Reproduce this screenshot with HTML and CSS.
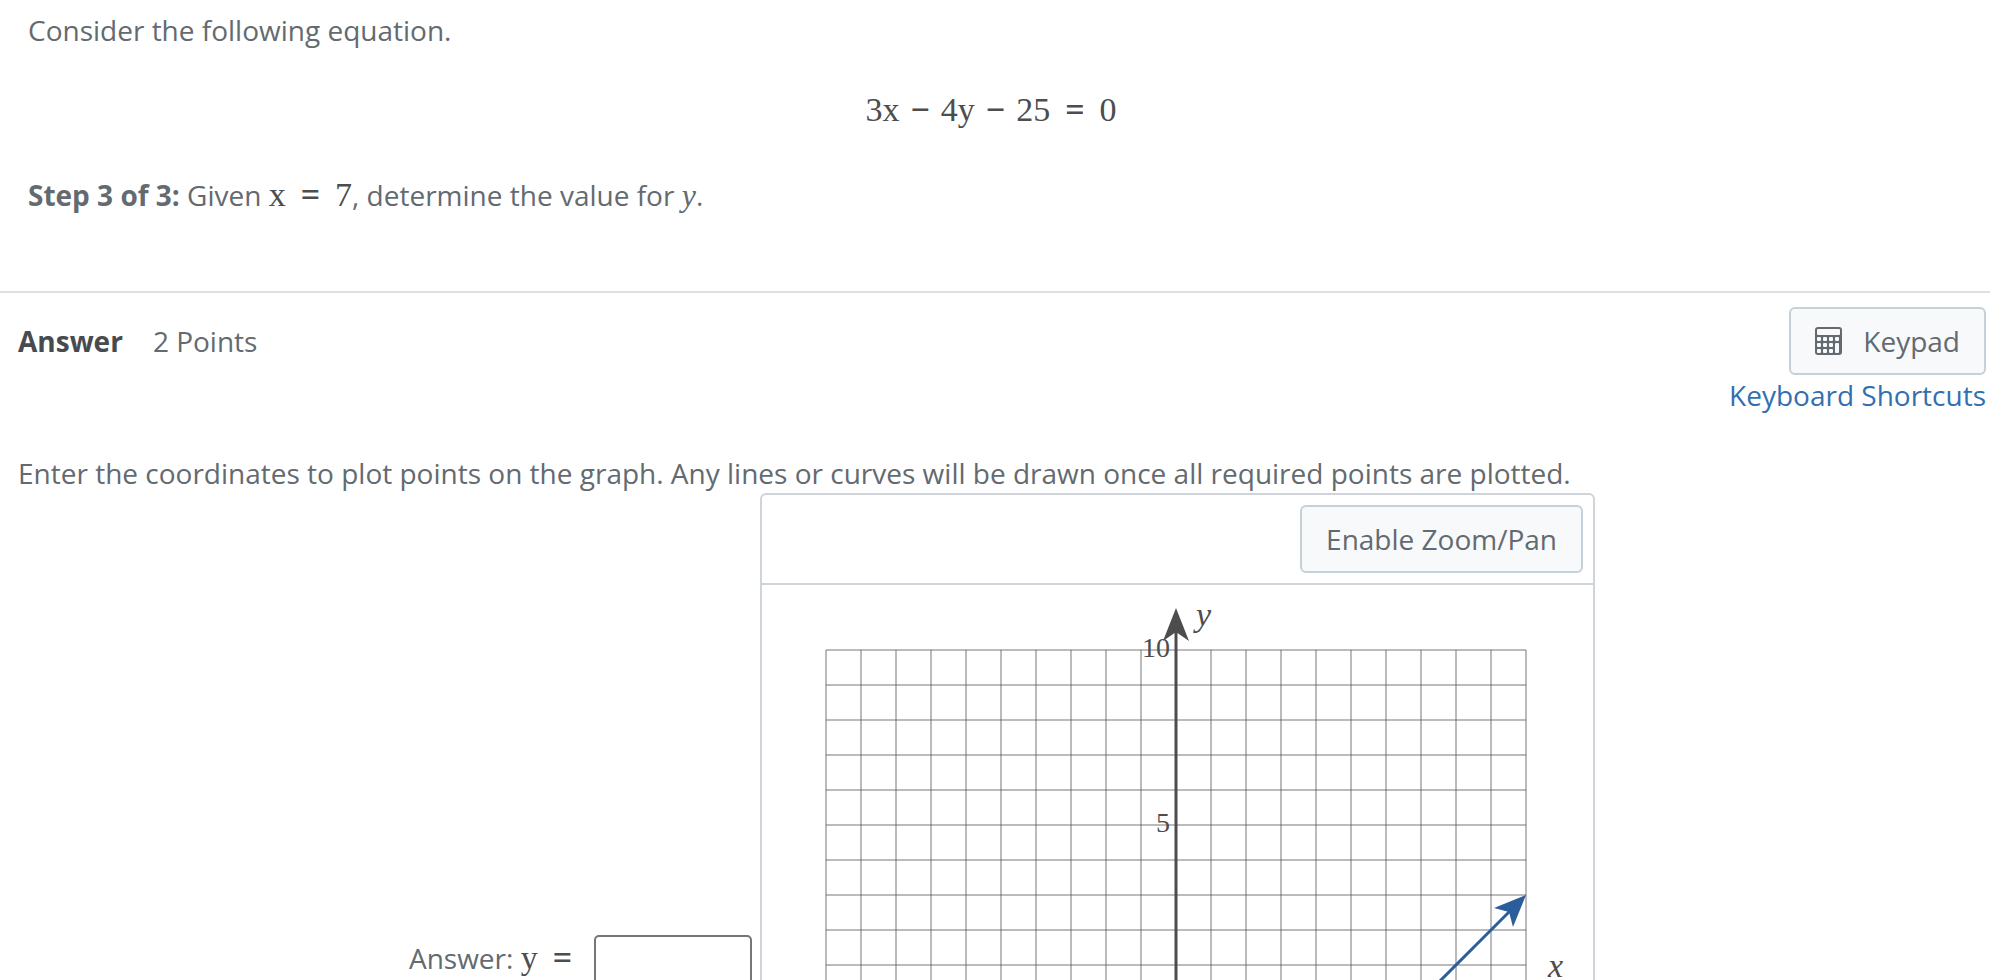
FILE: index.html
```html
<!DOCTYPE html>
<html lang="en">
<head>
  <meta charset="UTF-8">
  <title>Graphing Question</title>
  <link rel="stylesheet" href="styles.css">
</head>
<body>

<div class="question">
  <p>Consider the following equation.</p>
  <p class="equation math">3x<span class="op">&minus;</span>4y<span class="op">&minus;</span>25<span class="rel">=</span>0</p>
  <p><b>Step 3 of 3:</b> Given <span class="math">x<span class="rel">=</span>7</span>, determine the value for <i class="var">y</i>.</p>
</div>

<div class="answer">
  <div class="answer-header">
    <div class="answer-title">
      <h2>Answer</h2>
      <span>2 Points</span>
    </div>
    <div class="tools">
      <button class="btn" type="button">
        <svg class="icon" width="27" height="28" viewBox="0 0 27 28">
          <rect width="27" height="28" rx="3" fill="#636a70"/>
          <g fill="#f8f9fb">
            <rect x="2" y="2" width="23" height="6" rx="1"/>
            <rect x="2" y="10" width="4" height="4" rx="1"/>
            <rect x="8" y="10" width="4" height="4" rx="1"/>
            <rect x="14" y="10" width="4" height="4" rx="1"/>
            <rect x="20" y="10" width="4" height="4" rx="1"/>
            <rect x="2" y="16" width="4" height="4" rx="1"/>
            <rect x="8" y="16" width="4" height="4" rx="1"/>
            <rect x="14" y="16" width="4" height="4" rx="1"/>
            <rect x="20" y="16" width="4" height="10" rx="1"/>
            <rect x="2" y="22" width="4" height="4" rx="1"/>
            <rect x="8" y="22" width="4" height="4" rx="1"/>
            <rect x="14" y="22" width="4" height="4" rx="1"/>
          </g>
        </svg>
        Keypad
      </button>
      <a href="#">Keyboard Shortcuts</a>
    </div>
  </div>

  <p class="instructions">Enter the coordinates to plot points on the graph. Any lines or curves will be drawn once all required points are plotted.</p>

  <div class="work">
    <div class="field">
      <label for="yValue">Answer: <span class="math">y<span class="rel">=</span></span></label>
      <input type="text" id="yValue">
    </div>

    <div class="graph">
      <div class="graph-bar">
        <button class="btn" type="button">Enable Zoom/Pan</button>
      </div>
      <svg class="plot" width="831" height="840" viewBox="0 0 831 840">
        <!-- grid, one unit = 35px -->
        <path class="grid" d="M64 65V765M99 65V765M134 65V765M169 65V765M204 65V765M239 65V765M274 65V765M309 65V765M344 65V765M379 65V765M414 65V765M449 65V765M484 65V765M519 65V765M554 65V765M589 65V765M624 65V765M659 65V765M694 65V765M729 65V765M764 65V765"/>
        <path class="grid" d="M64 65H764M64 100H764M64 135H764M64 170H764M64 205H764M64 240H764M64 275H764M64 310H764M64 345H764M64 380H764M64 415H764M64 450H764M64 485H764M64 520H764M64 555H764M64 590H764M64 625H764M64 660H764M64 695H764M64 730H764M64 765H764"/>
        <!-- axes -->
        <path class="axis" d="M414 45V785M44 415H784"/>
        <path class="axis-head" d="M414 23L427 56L414 47L401 56ZM806 415L773 402L782 415L773 428Z"/>
        <text class="tick" x="408" y="72">10</text>
        <text class="tick" x="408" y="247">5</text>
        <text class="axis-name" x="434" y="41">y</text>
        <text class="axis-name" x="786" y="392">x</text>
        <!-- line -->
        <path class="line" d="M309 765L748 326"/>
        <path class="line-head" d="M764 310L751 342L747 327L732 323Z"/>
      </svg>
    </div>
  </div>
</div>

</body>
</html>
```

FILE: styles.css
```css
* {
  box-sizing: border-box;
}

body {
  margin: 0;
  height: 100vh;
  overflow: hidden;
  background: #fff;
  color: #636a70;
  font-family: 'Open Sans', sans-serif;
  font-size: 28px;
  line-height: 38px;
}

p {
  margin: 0;
}

.math {
  color: #4d4d4d;
  font-family: 'Liberation Serif', serif;
  font-size: 34px;
}

.op {
  margin: 0 11px;
  font-weight: bold;
}

.rel {
  margin: 0 15px;
  font-weight: bold;
}

.var {
  font-family: 'Liberation Serif', serif;
  font-size: 32px;
}

.question {
  padding: 11px 36px 77px 28px;
  border-bottom: 2px solid #dfdfe0;
}

.equation {
  margin: 39px 0 44px;
  line-height: 44px;
  text-align: center;
}

.answer {
  padding: 14px 4px 0 18px;
}

.answer-header {
  display: flex;
  justify-content: space-between;
}

.answer-title {
  display: flex;
  gap: 30px;
  padding-top: 15px;
}

.answer-title h2 {
  margin: 0;
  color: #474b50;
  font-size: 28px;
}

.tools {
  display: flex;
  flex-direction: column;
  align-items: flex-end;
  gap: 1px;
}

.tools a {
  color: #326fb0;
  text-decoration: none;
}

.btn {
  display: flex;
  align-items: center;
  gap: 21px;
  height: 68px;
  padding: 0 24px;
  border: 2px solid #c5d1d9;
  border-radius: 6px;
  background: #f8f9fb;
  color: #636a70;
  font: inherit;
  cursor: pointer;
}

.instructions {
  margin: 40px 0 1px;
}

.work {
  display: flex;
  justify-content: center;
  align-items: center;
  gap: 8px;
}

.field {
  display: flex;
  gap: 7px;
}

.field label {
  line-height: 46px;
}

.field input {
  width: 158px;
  height: 50px;
  border: 2px solid #767676;
  border-radius: 5px;
  font: inherit;
}

.graph {
  border: 2px solid #ced4da;
  border-radius: 6px;
}

.graph-bar {
  display: flex;
  justify-content: flex-end;
  padding: 10px;
  border-bottom: 2px solid #ced4da;
}

.plot {
  display: block;
  font-family: 'Liberation Serif', serif;
}

.grid {
  fill: none;
  stroke: #4d4d4d;
  stroke-opacity: 0.38;
  stroke-width: 2;
}

.axis {
  stroke: #4d4d4d;
  stroke-width: 3;
}

.axis-head,
.tick,
.axis-name {
  fill: #4d4d4d;
}

.tick {
  font-size: 28px;
  text-anchor: end;
}

.axis-name {
  font-size: 34px;
  font-style: italic;
}

.line {
  stroke: #2b5c9b;
  stroke-width: 3;
}

.line-head {
  fill: #2b5c9b;
}
```
